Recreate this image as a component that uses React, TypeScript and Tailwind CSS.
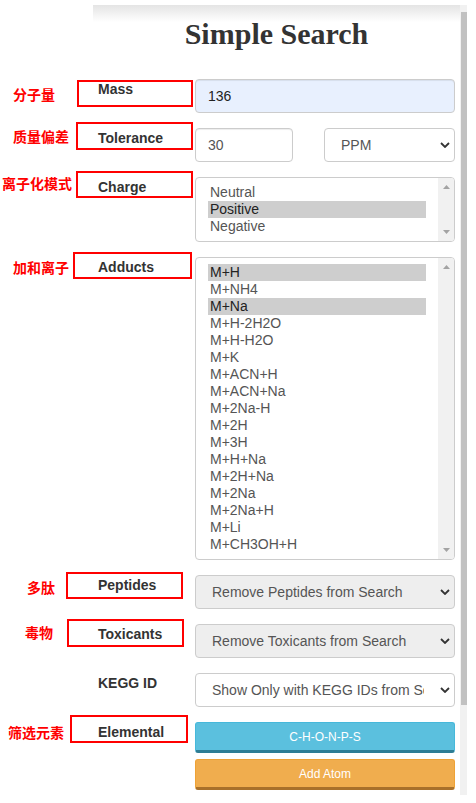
import type { ReactNode } from "react";

const CHARGES = ["Neutral", "Positive", "Negative"];

const ADDUCTS = [
  "M+H",
  "M+NH4",
  "M+Na",
  "M+H-2H2O",
  "M+H-H2O",
  "M+K",
  "M+ACN+H",
  "M+ACN+Na",
  "M+2Na-H",
  "M+2H",
  "M+3H",
  "M+H+Na",
  "M+2H+Na",
  "M+2Na",
  "M+2Na+H",
  "M+Li",
  "M+CH3OH+H",
];

interface RowProps {
  label: string;
  note?: string;
  noteClass?: string;
  boxClass?: string;
  children: ReactNode;
}

// one form line: label on the left, control on the right, red notes drawn over it
const Row = ({ label, note, noteClass, boxClass, children }: RowProps) => (
  <div className="relative flex items-start">
    <div className="w-[195px] shrink-0 pl-[98px] text-[14px] font-bold leading-5 text-[#333]">
      {label}
    </div>
    <div className="w-[260px]">{children}</div>
    {note && (
      <span
        className={`absolute whitespace-nowrap font-['Noto_Sans_CJK_SC',sans-serif] text-[14px] font-bold leading-5 text-[#ff0000] ${noteClass}`}
      >
        {note}
      </span>
    )}
    {boxClass && <span className={`absolute border-2 border-[#ff0000] ${boxClass}`} />}
  </div>
);

const Chevron = () => (
  <svg viewBox="0 0 10 6" className="ml-[16px] mr-[4px] h-[6px] w-[10px] shrink-0">
    <path d="M1 1l4 4 4-4" fill="none" stroke="#333" strokeWidth="1.8" />
  </svg>
);

const FakeSelect = ({ value, muted }: { value: string; muted?: boolean }) => (
  <div
    className={`flex h-[34px] items-center rounded-[4px] border border-[#ccc] pl-4 ${
      muted ? "bg-[#eeeeee]" : "bg-white"
    }`}
  >
    <span className="min-w-0 flex-1 overflow-hidden whitespace-nowrap text-[14px] text-[#555]">
      {value}
    </span>
    <Chevron />
  </div>
);

const ListBox = ({
  items,
  selected,
  heightClass,
}: {
  items: string[];
  selected: string[];
  heightClass: string;
}) => (
  <div className={`flex overflow-hidden rounded-[4px] border border-[#ccc] bg-white ${heightClass}`}>
    <div className="flex-1 px-3 pt-[6px]">
      {items.map((item) => (
        <div
          key={item}
          className={`pl-[2px] text-[14px] leading-[17px] ${
            selected.includes(item) ? "bg-[#cecece] text-[#222]" : "text-[#555]"
          }`}
        >
          {item}
        </div>
      ))}
    </div>
    <div className="flex w-[16px] flex-col items-center justify-between bg-[#f1f1f1] py-[7px]">
      <svg viewBox="0 0 7 4" className="h-[4px] w-[7px]">
        <path d="M3.5 0L7 4H0z" fill="#a3a3a3" />
      </svg>
      <svg viewBox="0 0 7 4" className="h-[4px] w-[7px]">
        <path d="M0 0h7L3.5 4z" fill="#a3a3a3" />
      </svg>
    </div>
  </div>
);

export default function App() {
  return (
    <div className="relative h-[803px] w-[476px] overflow-hidden bg-white font-['Liberation_Sans',Arial,sans-serif]">
      <div className="ml-[93px] mt-[5px] h-[74px] w-[367px] bg-[linear-gradient(to_bottom,#e4e4e4,#ffffff_17px)] pt-[12px] text-center">
        <h1 className="font-['Liberation_Serif','Times_New_Roman',serif] text-[30px] font-bold leading-[33px] text-[#333]">
          Simple Search
        </h1>
      </div>

      <div className="flex flex-col gap-[15px]">
        <Row
          label="Mass"
          note="分子量"
          noteClass="left-[13px] top-[5px]"
          boxClass="left-[77px] top-[1px] h-[27px] w-[116px]"
        >
          <input
            readOnly
            value="136"
            className="h-[34px] w-full rounded-[4px] border border-[#ccc] bg-[#e8f0fe] px-3 text-[14px] text-[#222] shadow-[inset_0_1px_1px_rgba(0,0,0,0.075)] outline-none"
          />
        </Row>

        <Row
          label="Tolerance"
          note="质量偏差"
          noteClass="left-[13px] top-[-2px]"
          boxClass="left-[76px] top-[-6px] h-[28px] w-[117px]"
        >
          <div className="flex justify-between">
            <input
              readOnly
              value="30"
              className="h-[34px] w-[98px] rounded-[4px] border border-[#ccc] bg-white px-3 text-[14px] text-[#555] shadow-[inset_0_1px_1px_rgba(0,0,0,0.075)] outline-none"
            />
            <div className="w-[131px]">
              <FakeSelect value="PPM" />
            </div>
          </div>
        </Row>

        <Row
          label="Charge"
          note="离子化模式"
          noteClass="left-[2px] top-[-4px]"
          boxClass="left-[76px] top-[-6px] h-[27px] w-[117px]"
        >
          <ListBox items={CHARGES} selected={["Positive"]} heightClass="h-[65px]" />
        </Row>

        <Row
          label="Adducts"
          note="加和离子"
          noteClass="left-[13px] top-[0px]"
          boxClass="left-[73px] top-[-5px] h-[27px] w-[119px]"
        >
          <ListBox items={ADDUCTS} selected={["M+H", "M+Na"]} heightClass="h-[303px]" />
        </Row>

        <Row
          label="Peptides"
          note="多肽"
          noteClass="left-[27px] top-[2px]"
          boxClass="left-[66px] top-[-3px] h-[27px] w-[117px]"
        >
          <FakeSelect value="Remove Peptides from Search" muted />
        </Row>

        <Row
          label="Toxicants"
          note="毒物"
          noteClass="left-[25px] top-[-2px]"
          boxClass="left-[67px] top-[-5px] h-[28px] w-[117px]"
        >
          <FakeSelect value="Remove Toxicants from Search" muted />
        </Row>

        <Row label="KEGG ID">
          <FakeSelect value="Show Only with KEGG IDs from Search" />
        </Row>

        <Row
          label="Elemental"
          note="筛选元素"
          noteClass="left-[8px] top-[0px]"
          boxClass="left-[70px] top-[-7px] h-[28px] w-[118px]"
        >
          <div className="flex flex-col gap-[6px]">
            <button className="h-[31px] w-full rounded-[3px] border border-[#46b8da] border-b-[3px] border-b-[#2e7d94] bg-[#5bc0de] text-[12px] text-white">
              C-H-O-N-P-S
            </button>
            <button className="h-[31px] w-full rounded-[3px] border border-[#eea236] border-b-[3px] border-b-[#a8702a] bg-[#f0ad4e] text-[12px] text-white">
              Add Atom
            </button>
          </div>
        </Row>
      </div>

      {/* page scrollbar */}
      <div className="absolute left-[460px] top-[5px] h-[790px] w-[7px] bg-[#f1f1f1]" />
      <div className="absolute left-[461px] top-[12px] h-[693px] w-[6px] bg-[#c1c1c1]" />
    </div>
  );
}
